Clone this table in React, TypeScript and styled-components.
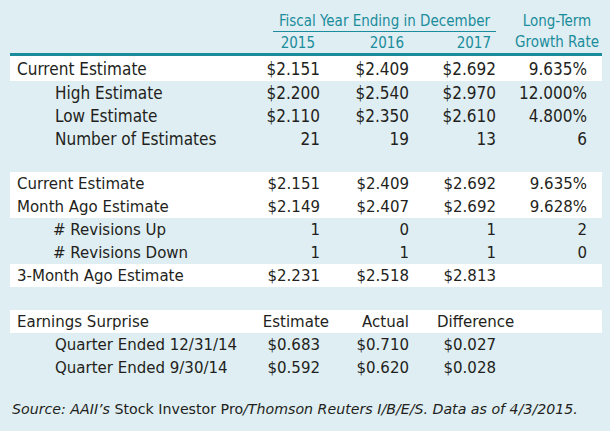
import React from 'react'
import styled, { createGlobalStyle } from 'styled-components'

const TEAL = '#1a8c9c'
const COLS = '1fr 70px 89px 87px 91px'

const GlobalStyle = createGlobalStyle`
  html, body {
    margin: 0;
    padding: 0;
    background: #dfeef2;
  }
  body {
    font-family: "DejaVu Sans", Verdana, sans-serif;
    color: #231f20;
  }
`

const Page = styled.div`
  width: 610px;
  height: 431px;
  box-sizing: border-box;
  padding: 11px 8px 0 10px;
  background: #dfeef2;
  overflow: hidden;
`

const Head = styled.div`
  display: grid;
  grid-template-columns: ${COLS};
  grid-template-rows: 21px 21px;
  padding: 0 15px 0 7px;
  border-bottom: 3px solid ${TEAL};
  font-family: "DejaVu Sans Condensed", "DejaVu Sans", sans-serif;
  font-size: 15px;
  line-height: 20px;
  color: ${TEAL};
`

const Fiscal = styled.div`
  grid-column: 2 / 5;
  grid-row: 1;
  margin-left: 23px;
  border-bottom: 1px solid ${TEAL};
  text-align: center;
  white-space: nowrap;
`

const Year = styled.div<{ $col: number }>`
  grid-column: ${p => p.$col};
  grid-row: 2;
  align-self: end;
  text-align: right;
  padding-right: 5px;
`

const Growth = styled.div`
  grid-column: 5;
  grid-row: 1 / 3;
  margin-right: -15px;
  padding-left: 16px;
  text-align: center;
  line-height: 21px;
  white-space: nowrap;
`

const Section = styled.div<{ $condensed?: boolean; $gap: number }>`
  margin-top: ${p => p.$gap}px;
  font-family: ${p =>
    p.$condensed
      ? '"DejaVu Sans Condensed", "DejaVu Sans", sans-serif'
      : '"DejaVu Sans", Verdana, sans-serif'};
  font-size: ${p => (p.$condensed ? 17 : 15)}px;
`

const Row = styled.div<{ $white?: boolean; $tall?: boolean }>`
  display: grid;
  grid-template-columns: ${COLS};
  align-items: center;
  height: ${p => (p.$tall ? 25 : 23)}px;
  padding: 0 15px 0 7px;
  background: ${p => (p.$white ? '#fff' : 'transparent')};
  white-space: nowrap;
`

const Label = styled.div<{ $indent?: number }>`
  padding-left: ${p => p.$indent ?? 0}px;
`

const Num = styled.div`
  text-align: right;
`

const SurpriseHead = styled.div<{ $align: 'left' | 'right'; $shift?: number }>`
  text-align: ${p => p.$align};
  margin-right: ${p => (p.$align === 'right' ? -(p.$shift ?? 0) : 0)}px;
  padding-left: ${p => (p.$align === 'left' ? p.$shift ?? 0 : 0)}px;
`

const Source = styled.p`
  margin: 20px 0 0 2px;
  font-size: 14.2px;
  line-height: 20px;
  font-style: italic;
  white-space: nowrap;

  span {
    font-style: normal;
  }
`

type Line = {
  label: string
  values: string[]
  indent?: number
  white?: boolean
  tall?: boolean
}

const estimates: Line[] = [
  { label: 'Current Estimate', values: ['$2.151', '$2.409', '$2.692', '9.635%'], white: true, tall: true },
  { label: 'High Estimate', values: ['$2.200', '$2.540', '$2.970', '12.000%'], indent: 38 },
  { label: 'Low Estimate', values: ['$2.110', '$2.350', '$2.610', '4.800%'], indent: 38 },
  { label: 'Number of Estimates', values: ['21', '19', '13', '6'], indent: 38 }
]

const revisions: Line[] = [
  { label: 'Current Estimate', values: ['$2.151', '$2.409', '$2.692', '9.635%'], white: true },
  { label: 'Month Ago Estimate', values: ['$2.149', '$2.407', '$2.692', '9.628%'], white: true },
  { label: '# Revisions Up', values: ['1', '0', '1', '2'], indent: 36 },
  { label: '# Revisions Down', values: ['1', '1', '1', '0'], indent: 36 },
  { label: '3-Month Ago Estimate', values: ['$2.231', '$2.518', '$2.813', ''], white: true }
]

const surprises: Line[] = [
  { label: 'Quarter Ended 12/31/14', values: ['$0.683', '$0.710', '$0.027', ''], indent: 38 },
  { label: 'Quarter Ended 9/30/14', values: ['$0.592', '$0.620', '$0.028', ''], indent: 38 }
]

const renderRows = (lines: Line[]) =>
  lines.map((l, i) => (
    <Row key={i} $white={l.white} $tall={l.tall}>
      <Label $indent={l.indent}>{l.label}</Label>
      {l.values.map((v, j) => (
        <Num key={j}>{v}</Num>
      ))}
    </Row>
  ))

const App = () => {
  return (
    <>
      <GlobalStyle />
      <Page>
        <Head>
          <Fiscal>Fiscal Year Ending in December</Fiscal>
          <Year $col={2}>2015</Year>
          <Year $col={3}>2016</Year>
          <Year $col={4}>2017</Year>
          <Growth>
            Long-Term
            <br />
            Growth Rate
          </Growth>
        </Head>

        <Section $condensed $gap={0}>
          {renderRows(estimates)}
        </Section>

        <Section $gap={22}>{renderRows(revisions)}</Section>

        <Section $gap={23}>
          <Row $white>
            <Label>Earnings Surprise</Label>
            <SurpriseHead $align="right" $shift={9}>Estimate</SurpriseHead>
            <SurpriseHead $align="right">Actual</SurpriseHead>
            <SurpriseHead $align="left" $shift={28}>Difference</SurpriseHead>
            <div />
          </Row>
          {renderRows(surprises)}
        </Section>

        <Source>
          Source: AAII’s <span>Stock Investor Pro</span>/Thomson Reuters I/B/E/S. Data as of 4/3/2015.
        </Source>
      </Page>
    </>
  )
}

export default App
